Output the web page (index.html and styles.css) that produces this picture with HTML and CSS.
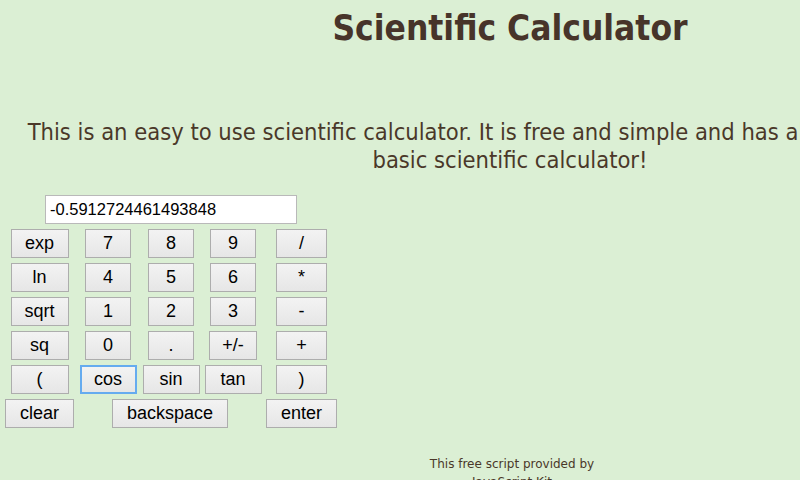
FILE: index.html
```html
<!DOCTYPE html>
<html>

<head>
    <title>Scientific Calculator</title>
    <meta charset="utf-8">
    <meta name="viewport" content="width=device-width, initial-scale=1.0">
    <link rel="stylesheet" href="styles.css">
</head>

<body>
    <h1>Scientific Calculator</h1>

    <p class="intro">This is an easy to use scientific calculator. It is free and simple and has all the features of a<br>
        basic scientific calculator!</p>

    <form class="calc" name="calculator">
        <input class="display" type="text" name="input" value="-0.5912724461493848">

        <button type="button" class="fn">exp</button>
        <button type="button" class="num">7</button>
        <button type="button" class="num">8</button>
        <button type="button" class="num">9</button>
        <button type="button" class="op">/</button>

        <button type="button" class="fn">ln</button>
        <button type="button" class="num">4</button>
        <button type="button" class="num">5</button>
        <button type="button" class="num">6</button>
        <button type="button" class="op">*</button>

        <button type="button" class="fn">sqrt</button>
        <button type="button" class="num">1</button>
        <button type="button" class="num">2</button>
        <button type="button" class="num">3</button>
        <button type="button" class="op">-</button>

        <button type="button" class="fn">sq</button>
        <button type="button" class="num">0</button>
        <button type="button" class="num">.</button>
        <button type="button" class="num wide">+/-</button>
        <button type="button" class="op">+</button>

        <button type="button" class="fn">(</button>
        <button type="button" class="trig valgt">cos</button>
        <button type="button" class="trig">sin</button>
        <button type="button" class="trig">tan</button>
        <button type="button" class="op">)</button>

        <button type="button" class="auto">clear</button>
        <button type="button" class="auto span3">backspace</button>
        <button type="button" class="auto">enter</button>
    </form>

    <p class="credit">This free script provided by<br>
        JavaScript Kit</p>
</body></html>
```

FILE: styles.css
```css
html {
    overflow: hidden;
    background-color: #dbefd4;
}

body {
    margin: 0;
    width: 1020px;
    color: #4a3829;
    font-family: "DejaVu Sans Condensed", "DejaVu Sans", sans-serif;
}

h1 {
    margin: 0;
    padding-top: 7px;
    text-align: center;
    font-size: 35px;
    line-height: 42px;
    font-weight: bold;
    color: #47342a;
}

.intro {
    margin: 69px 0 0;
    text-align: center;
    font-size: 23.5px;
    line-height: 28px;
}

.calc {
    display: grid;
    grid-template-columns: 71px 66px 60px 64px 73px;
    grid-auto-rows: 29px;
    row-gap: 5px;
    justify-items: center;
    width: 334px;
    margin: 21px 0 0 4px;
}

.display {
    grid-column: 1 / -1;
    box-sizing: border-box;
    width: 252px;
    height: 29px;
    padding: 0 4px;
    border: 1px solid #b9b9b9;
    background: white;
    color: black;
    font-family: "Liberation Sans", Arial, sans-serif;
    font-size: 16.5px;
}

.calc button {
    box-sizing: border-box;
    height: 29px;
    padding: 0;
    border: 1px solid #adadad;
    background: linear-gradient(#f3f3f3, #e6e6e6);
    color: black;
    font-family: "Liberation Sans", Arial, sans-serif;
    font-size: 18px;
}

.fn {
    width: 58px;
}

.num {
    width: 46px;
}

.num.wide {
    width: 48px;
}

.op {
    width: 51px;
}

.trig {
    width: 57px;
}

.calc .valgt {
    border: 2px solid #65abef;
}

.calc .auto {
    padding: 0 14px;
}

.span3 {
    grid-column: span 3;
}

.credit {
    margin: 27px 0 0;
    padding-left: 4px;
    text-align: center;
    font-family: "DejaVu Sans", sans-serif;
    font-size: 12px;
    line-height: 18px;
}
```
